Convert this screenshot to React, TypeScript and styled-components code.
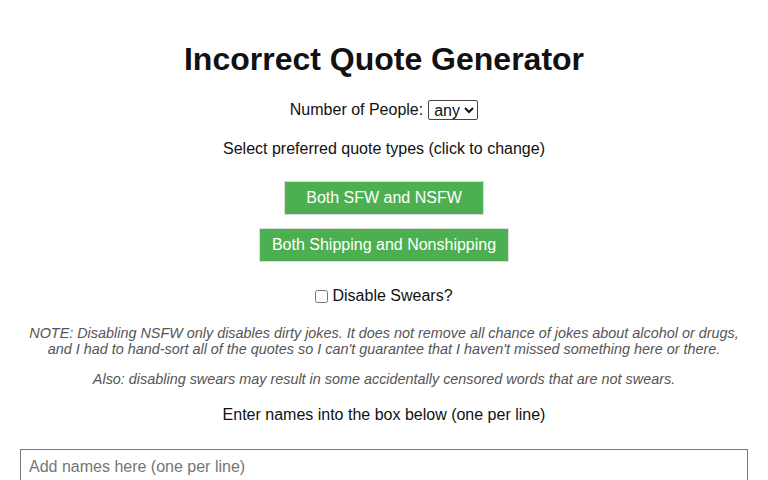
import React from 'react';
import styled, { createGlobalStyle } from 'styled-components';

const GlobalStyle = createGlobalStyle`
  body {
    margin: 0;
    background: #fff;
    font-family: 'Liberation Sans', Arial, sans-serif;
    color: #111;
  }
`;

const Page = styled.div`
  display: flex;
  flex-direction: column;
  align-items: center;
  padding: 41px 20px 0;
  text-align: center;
`;

const Title = styled.h1`
  margin: 0;
  font-size: 32px;
  line-height: 37px;
  font-weight: bold;
`;

const Line = styled.div<{ gap: number }>`
  margin-top: ${(p) => p.gap}px;
  font-size: 16px;
  line-height: 18px;
`;

const PeopleRow = styled.label`
  margin-top: 21px;
  display: flex;
  align-items: center;
  gap: 5px;
  height: 22px;
  font-size: 16px;
`;

const Select = styled.select`
  font-family: 'Liberation Sans', Arial, sans-serif;
  font-size: 16px;
  height: 20px;
  padding: 0 1px;
  border: 1px solid #444;
  border-radius: 2px;
  background: #fff;
  color: #111;
`;

const TypeButton = styled.button<{ gap: number }>`
  margin-top: ${(p) => p.gap}px;
  height: 34px;
  padding: 0 12px;
  min-width: 200px;
  background: #4caf50;
  color: #fff;
  border: 1px solid #ddd;
  font-family: 'Liberation Sans', Arial, sans-serif;
  font-size: 16px;
  cursor: pointer;
`;

const CheckRow = styled.label`
  margin-top: 25px;
  display: flex;
  align-items: center;
  gap: 4px;
  font-size: 16px;
  line-height: 18px;
  input {
    margin: 0;
    width: 13px;
    height: 13px;
  }
`;

const Note = styled.p<{ gap: number }>`
  margin: ${(p) => p.gap}px 0 0;
  font-size: 14.4px;
  line-height: 16px;
  font-style: italic;
  color: #555;
`;

const Names = styled.textarea`
  margin-top: 25px;
  align-self: stretch;
  box-sizing: border-box;
  height: 60px;
  padding: 8px 8px;
  border: 1px solid #767676;
  font-family: 'Liberation Sans', Arial, sans-serif;
  font-size: 16px;
  resize: none;
  &::placeholder {
    color: #757575;
  }
`;

export default function App() {
  return (
    <>
      <GlobalStyle />
      <Page>
        <Title>Incorrect Quote Generator</Title>
        <PeopleRow>
          Number of People:
          <Select defaultValue="any">
            <option value="any">any</option>
            <option value="2">2</option>
            <option value="3">3</option>
          </Select>
        </PeopleRow>
        <Line gap={19}>Select preferred quote types (click to change)</Line>
        <TypeButton gap={23}>Both SFW and NSFW</TypeButton>
        <TypeButton gap={13}>Both Shipping and Nonshipping</TypeButton>
        <CheckRow>
          <input type="checkbox" />
          Disable Swears?
        </CheckRow>
        <Note gap={20}>
          NOTE: Disabling NSFW only disables dirty jokes. It does not remove all chance of jokes about alcohol or drugs,
          <br />
          and I had to hand-sort all of the quotes so I can't guarantee that I haven't missed something here or there.
        </Note>
        <Note gap={14}>Also: disabling swears may result in some accidentally censored words that are not swears.</Note>
        <Line gap={19}>Enter names into the box below (one per line)</Line>
        <Names placeholder="Add names here (one per line)" />
      </Page>
    </>
  );
}
